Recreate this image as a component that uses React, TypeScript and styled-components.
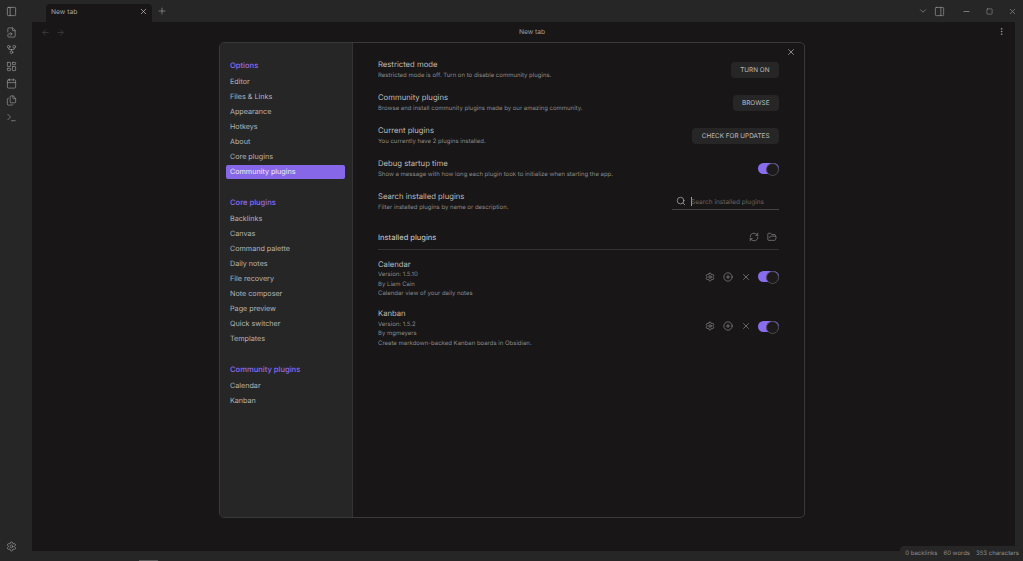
import styled, { createGlobalStyle } from "styled-components";
import {
  ArrowLeft,
  ArrowRight,
  Calendar,
  ChevronDown,
  Files,
  FolderOpen,
  FileSymlink,
  GitFork,
  LayoutDashboard,
  Minus,
  MoreVertical,
  PanelLeft,
  PanelRight,
  PlusCircle,
  Plus,
  RefreshCw,
  Search,
  Settings,
  Square,
  Terminal,
  X,
} from "lucide-react";

const GlobalStyle = createGlobalStyle`
  html, body {
    margin: 0;
    padding: 0;
    background: #262626;
  }
  * {
    box-sizing: border-box;
  }
  body {
    font-family: Inter, "Liberation Sans", sans-serif;
    text-rendering: geometricPrecision;
  }
`;

const optionItems = ["Editor", "Files & Links", "Appearance", "Hotkeys", "About", "Core plugins", "Community plugins"];
const coreItems = ["Backlinks", "Canvas", "Command palette", "Daily notes", "File recovery", "Note composer", "Page preview", "Quick switcher", "Templates"];
const communityItems = ["Calendar", "Kanban"];
const ribbonIcons = [FileSymlink, GitFork, LayoutDashboard, Calendar, Files, Terminal];

const plugins = [
  { name: "Calendar", version: "Version: 1.5.10", author: "By Liam Cain", desc: "Calendar view of your daily notes" },
  { name: "Kanban", version: "Version: 1.5.2", author: "By mgmeyers", desc: "Create markdown-backed Kanban boards in Obsidian." },
];

const App = () => {
  return (
    <>
      <GlobalStyle />
      <Page>
        <TitleBar>
          <RibbonHead>
            <PanelLeft size={11} strokeWidth={1.4} />
          </RibbonHead>
          <Tab>
            <span>New tab</span>
            <X size={9} strokeWidth={1.8} color="#c8c8c8" />
          </Tab>
          <NewTab>
            <Plus size={10} strokeWidth={1.5} />
          </NewTab>
          <WindowControls>
            <LayoutButton>
              <ChevronDown size={10} strokeWidth={1.5} />
            </LayoutButton>
            <LayoutButton>
              <PanelRight size={11} strokeWidth={1.4} />
            </LayoutButton>
            <WinSpacer />
            <WinButton>
              <Minus size={9} strokeWidth={1.8} />
            </WinButton>
            <WinButton>
              <Square size={7} strokeWidth={1.8} />
            </WinButton>
            <WinButton>
              <X size={9} strokeWidth={1.5} />
            </WinButton>
          </WindowControls>
        </TitleBar>
        <Body>
          <Ribbon>
            <RibbonIcons>
              {ribbonIcons.map((Icon, i) => (
                <Icon key={i} size={11} strokeWidth={1.4} />
              ))}
            </RibbonIcons>
            <Settings size={11} strokeWidth={1.4} />
          </Ribbon>
          <Workspace>
            <ViewHeader>
              <NavArrows>
                <ArrowLeft size={9} strokeWidth={1.5} />
                <ArrowRight size={9} strokeWidth={1.5} />
              </NavArrows>
              <ViewTitle>New tab</ViewTitle>
              <MoreVertical size={9} strokeWidth={1.8} color="#a8a8a8" />
            </ViewHeader>
          </Workspace>
          <RightStrip />
        </Body>
        <StatusRow>
          <ScrollMark />
        </StatusRow>
        <StatusBar>
          <span>0 backlinks</span>
          <span>60 words</span>
          <span>353 characters</span>
        </StatusBar>

        <Modal>
          <Sidebar>
            <SideHeading>Options</SideHeading>
            {optionItems.map((item) => (
              <SideItem key={item} $active={item === "Community plugins"}>
                {item}
              </SideItem>
            ))}
            <SideHeading $gap>Core plugins</SideHeading>
            {coreItems.map((item) => (
              <SideItem key={item}>{item}</SideItem>
            ))}
            <SideHeading $gap>Community plugins</SideHeading>
            {communityItems.map((item) => (
              <SideItem key={item}>{item}</SideItem>
            ))}
          </Sidebar>
          <Content>
            <CloseButton>
              <X size={10} strokeWidth={1.6} />
            </CloseButton>
            <SettingRow>
              <SettingText>
                <SettingName>Restricted mode</SettingName>
                <SettingDesc>Restricted mode is off. Turn on to disable community plugins.</SettingDesc>
              </SettingText>
              <Button>TURN ON</Button>
            </SettingRow>
            <SettingRow>
              <SettingText>
                <SettingName>Community plugins</SettingName>
                <SettingDesc>Browse and install community plugins made by our amazing community.</SettingDesc>
              </SettingText>
              <Button>BROWSE</Button>
            </SettingRow>
            <SettingRow>
              <SettingText>
                <SettingName>Current plugins</SettingName>
                <SettingDesc>You currently have 2 plugins installed.</SettingDesc>
              </SettingText>
              <Button>CHECK FOR UPDATES</Button>
            </SettingRow>
            <SettingRow>
              <SettingText>
                <SettingName>Debug startup time</SettingName>
                <SettingDesc>Show a message with how long each plugin took to initialize when starting the app.</SettingDesc>
              </SettingText>
              <Toggle />
            </SettingRow>
            <SettingRow>
              <SettingText>
                <SettingName>Search installed plugins</SettingName>
                <SettingDesc>Filter installed plugins by name or description.</SettingDesc>
              </SettingText>
              <SearchBox>
                <Search size={10} strokeWidth={1.5} color="#c8c8c8" />
                <Caret />
                <span>Search installed plugins</span>
              </SearchBox>
            </SettingRow>
            <SectionHead>
              <SectionTitle>Installed plugins</SectionTitle>
              <SectionIcons>
                <RefreshCw size={10} strokeWidth={1.4} />
                <FolderOpen size={10} strokeWidth={1.4} />
              </SectionIcons>
            </SectionHead>
            <PluginList>
              {plugins.map((plugin) => (
                <PluginRow key={plugin.name}>
                  <SettingText>
                    <PluginName>{plugin.name}</PluginName>
                    <PluginMeta>{plugin.version}</PluginMeta>
                    <PluginMeta>{plugin.author}</PluginMeta>
                    <PluginMeta>{plugin.desc}</PluginMeta>
                  </SettingText>
                  <PluginActions>
                    <Settings size={10} strokeWidth={1.4} />
                    <PlusCircle size={10} strokeWidth={1.4} />
                    <X size={10} strokeWidth={1.4} />
                    <Toggle />
                  </PluginActions>
                </PluginRow>
              ))}
            </PluginList>
          </Content>
        </Modal>
      </Page>
    </>
  );
};

const Page = styled.div`
  position: relative;
  width: 1023px;
  height: 561px;
  overflow: hidden;
  display: flex;
  flex-direction: column;
  background: #262626;
  color: #bdbdbd;
`;

const TitleBar = styled.div`
  height: 22px;
  display: flex;
  align-items: flex-end;
  background: #262626;
  flex-shrink: 0;
`;

const RibbonHead = styled.div`
  width: 46px;
  height: 22px;
  padding-left: 6px;
  display: flex;
  align-items: center;
  color: #a8a8a8;
`;

const Tab = styled.div`
  width: 106px;
  height: 18px;
  padding: 0 4px 3px 5px;
  display: flex;
  align-items: center;
  justify-content: space-between;
  background: #181616;
  border-radius: 4px 4px 0 0;
  font-size: 6.7px;
  color: #a8a8a8;
`;

const NewTab = styled.div`
  width: 20px;
  height: 22px;
  display: flex;
  align-items: center;
  justify-content: center;
  color: #a0a0a0;
`;

const WindowControls = styled.div`
  margin-left: auto;
  margin-right: -1px;
  height: 22px;
  display: flex;
  align-items: center;
  color: #a0a0a0;
`;

const LayoutButton = styled.div`
  width: 17px;
  display: flex;
  justify-content: center;
`;

const WinButton = styled.div`
  width: 23px;
  display: flex;
  justify-content: center;
`;

const WinSpacer = styled.div`
  width: 7px;
`;

const Body = styled.div`
  flex: 1;
  display: flex;
  min-height: 0;
`;

const Ribbon = styled.div`
  width: 32px;
  padding: 5px 0 0 6px;
  display: flex;
  flex-direction: column;
  justify-content: space-between;
  color: #a0a0a0;

  > svg {
    margin-bottom: -1px;
  }
`;

const RibbonIcons = styled.div`
  display: flex;
  flex-direction: column;
  gap: 6px;
`;

const Workspace = styled.div`
  flex: 1;
  background: #181616;
`;

const ViewHeader = styled.div`
  height: 19px;
  padding: 0 9px 0 9px;
  display: flex;
  align-items: center;
  justify-content: space-between;
`;

const NavArrows = styled.div`
  display: flex;
  gap: 6px;
  padding-top: 1px;
  color: #4f4f4f;
`;

const ViewTitle = styled.div`
  padding-left: 2px;
  font-size: 6.7px;
  color: #a0a0a0;
`;

const RightStrip = styled.div`
  width: 8px;
`;

const StatusRow = styled.div`
  height: 10px;
  position: relative;
  flex-shrink: 0;
`;

const ScrollMark = styled.div`
  position: absolute;
  left: 139px;
  bottom: 0;
  width: 19px;
  height: 1px;
  background: #5a5a5a;
`;

const StatusBar = styled.div`
  position: absolute;
  right: 0;
  bottom: 0;
  height: 15px;
  padding: 0 4px 0 5px;
  display: flex;
  align-items: center;
  gap: 6px;
  background: #262626;
  border-radius: 4px 0 0 0;
  font-size: 6px;
  color: #8f8f8f;
`;

const Modal = styled.div`
  position: absolute;
  left: 219px;
  top: 42px;
  width: 586px;
  height: 476px;
  display: flex;
  background: #181616;
  border: 1px solid #3a3a3a;
  border-radius: 5px;
  overflow: hidden;
`;

const Sidebar = styled.div`
  width: 133px;
  padding: 16px 7px 0 6px;
  background: #262626;
  border-right: 1px solid #333;
  flex-shrink: 0;
`;

const SideHeading = styled.div<{ $gap?: boolean }>`
  height: 13px;
  margin: ${(p) => (p.$gap ? "16.5px 0 3px" : "0 0 3px")};
  padding-left: 4px;
  font-size: 7.6px;
  line-height: 13px;
  font-weight: 500;
  color: #8f6cf0;
`;

const SideItem = styled.div<{ $active?: boolean }>`
  height: 14px;
  margin-bottom: 1.05px;
  padding-left: 4px;
  font-size: 7.2px;
  line-height: 14px;
  border-radius: 2px;
  color: ${(p) => (p.$active ? "#eee" : "#b4b4b4")};
  background: ${(p) => (p.$active ? "#8667e8" : "transparent")};
`;

const Content = styled.div`
  position: relative;
  flex: 1;
  padding: 10px 25px 0 25px;
`;

const CloseButton = styled.div`
  position: absolute;
  top: 4px;
  right: 8px;
  display: flex;
  color: #c0c0c0;
`;

const SettingRow = styled.div`
  height: 33px;
  display: flex;
  align-items: center;
  justify-content: space-between;
`;

const SettingText = styled.div`
  padding-top: 1.5px;
`;

const SettingName = styled.div`
  font-size: 7.7px;
  line-height: 12px;
  color: #bdbdbd;
`;

const SettingDesc = styled.div`
  font-size: 6px;
  line-height: 9.8px;
  color: #8a8a8a;
`;

const Button = styled.div`
  height: 16px;
  padding: 0 9.5px;
  display: flex;
  align-items: center;
  background: #262626;
  border-radius: 4px;
  font-size: 6.4px;
  color: #bdbdbd;
`;

const Toggle = styled.div`
  position: relative;
  width: 21px;
  height: 11px;
  background: #8a6cf0;
  border-radius: 6px;

  &::after {
    content: "";
    position: absolute;
    right: 0;
    top: 0;
    width: 11px;
    height: 11px;
    background: #1c1a1a;
    border: 1px solid #4a4a4a;
    border-radius: 50%;
  }
`;

const SearchBox = styled.div`
  width: 107px;
  height: 16px;
  padding-left: 4px;
  display: flex;
  align-items: center;
  border-bottom: 1px solid #444;
  font-size: 6.5px;
  color: #666;

  svg {
    margin-right: 5px;
  }

  span {
    padding-top: 2px;
  }
`;

const Caret = styled.div`
  width: 1px;
  height: 9px;
  margin-right: -1px;
  background: #a0a0a0;
`;

const SectionHead = styled.div`
  height: 31.5px;
  padding-top: 7px;
  display: flex;
  align-items: center;
  justify-content: space-between;
  border-bottom: 1px solid #333;
`;

const SectionTitle = styled.span`
  padding-top: 2px;
  font-size: 7.5px;
  font-weight: 500;
  color: #bdbdbd;
`;

const SectionIcons = styled.div`
  padding-right: 2px;
  display: flex;
  gap: 8px;
  color: #a0a0a0;
`;

const PluginList = styled.div`
  padding-top: 4px;
`;

const PluginRow = styled.div`
  height: 49.5px;
  display: flex;
  align-items: center;
  justify-content: space-between;
`;

const PluginName = styled(SettingName)`
  line-height: 10.5px;
`;

const PluginMeta = styled(SettingDesc)`
  line-height: 9.5px;
`;

const PluginActions = styled.div`
  margin-bottom: 3px;
  display: flex;
  align-items: center;
  gap: 8px;
  color: #a0a0a0;

  ${Toggle} {
    margin-left: -1px;
  }
`;

export default App;
